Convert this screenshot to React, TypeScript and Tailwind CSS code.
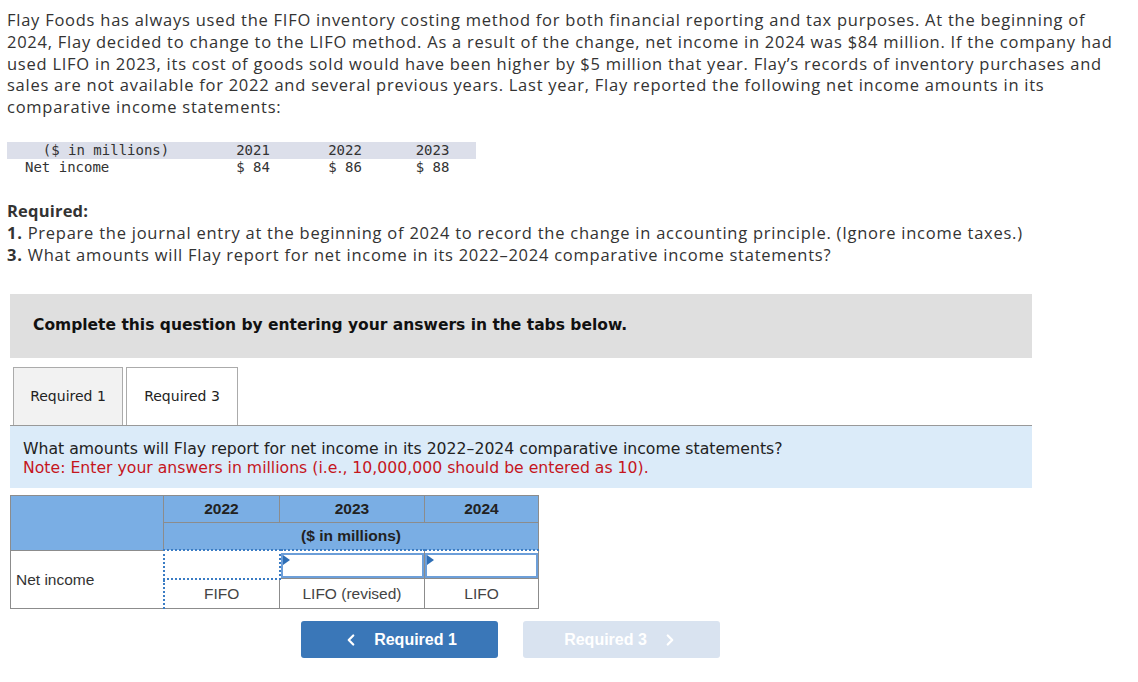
import { ChevronLeft, ChevronRight } from 'lucide-react';

const intro = [
  'Flay Foods has always used the FIFO inventory costing method for both financial reporting and tax purposes. At the beginning of',
  '2024, Flay decided to change to the LIFO method. As a result of the change, net income in 2024 was $84 million. If the company had',
  'used LIFO in 2023, its cost of goods sold would have been higher by $5 million that year. Flay’s records of inventory purchases and',
  'sales are not available for 2022 and several previous years. Last year, Flay reported the following net income amounts in its',
  'comparative income statements:',
];

const prior = [
  { year: '2021', value: '$ 84' },
  { year: '2022', value: '$ 86' },
  { year: '2023', value: '$ 88' },
];

function Flag() {
  return (
    <svg width="7" height="10" viewBox="0 0 7 10" className="absolute left-0 top-0">
      <path d="M0 0 L7 5 L0 10 Z" fill="#2f6fb6" />
    </svg>
  );
}

export default function App() {
  return (
    <div className="w-[1138px] h-[682px] bg-white overflow-hidden text-[#333]">
      {/* problem text */}
      <div className="pl-[7px] pt-[9px] font-['Open_Sans',sans-serif] text-[16.5px] tracking-[0.75px] leading-[21.75px]">
        {intro.map((line) => (
          <div key={line} className="whitespace-nowrap">
            {line}
          </div>
        ))}
      </div>

      {/* prior year figures */}
      <div className="ml-[7px] mt-[24px] w-[469px] font-['DejaVu_Sans_Mono',monospace] text-[14px] leading-[17px]">
        <div className="grid grid-cols-[198px_96px_88px_87px] bg-[#dcdfea]">
          <div className="text-center">($ in millions)</div>
          {prior.map((p) => (
            <div key={p.year} className="text-center">
              {p.year}
            </div>
          ))}
        </div>
        <div className="grid grid-cols-[198px_96px_88px_87px]">
          <div className="pl-[18px]">Net income</div>
          {prior.map((p) => (
            <div key={p.year} className="text-center">
              {p.value}
            </div>
          ))}
        </div>
      </div>

      {/* required */}
      <div className="pl-[7px] mt-[24px] font-['Open_Sans',sans-serif] text-[16.5px] tracking-[0.75px] leading-[22px]">
        <div className="font-bold tracking-[0.2px]">Required:</div>
        <div className="whitespace-nowrap">
          <span className="font-bold">1.</span> Prepare the journal entry at the beginning of 2024 to record the change in accounting principle. (Ignore income taxes.)
        </div>
        <div className="whitespace-nowrap">
          <span className="font-bold">3.</span> What amounts will Flay report for net income in its 2022–2024 comparative income statements?
        </div>
      </div>

      <div className="ml-[10px] mt-[28px] w-[1022px] h-[64px] bg-[#dfdfdf] flex items-center pl-[23px] font-['DejaVu_Sans',sans-serif] font-bold text-[15.5px] text-[#111]">
        Complete this question by entering your answers in the tabs below.
      </div>

      {/* tabs */}
      <div className="ml-[13px] mt-[9px] flex gap-[3px] h-[58px] font-['DejaVu_Sans',sans-serif] text-[14px] text-[#222]">
        <div className="w-[110px] bg-[#f2f2f2] border border-b-0 border-[#ababab] flex items-center justify-center">Required 1</div>
        <div className="w-[112px] bg-white border border-b-0 border-[#ababab] flex items-center justify-center">Required 3</div>
      </div>

      <div className="ml-[10px] w-[1022px] h-[63px] bg-[#dbebf9] border-t border-[#999] pl-[13px] pt-[13px] font-['DejaVu_Sans',sans-serif] text-[15.7px] leading-[19px]">
        <div className="text-[#222]">What amounts will Flay report for net income in its 2022–2024 comparative income statements?</div>
        <div className="text-[#c5161d]">Note: Enter your answers in millions (i.e., 10,000,000 should be entered as 10).</div>
      </div>

      {/* answer table */}
      <table className="ml-[10px] mt-[7px] border-collapse font-['Liberation_Sans',Arial,sans-serif] text-[15.5px] text-[#222]">
        <colgroup>
          <col className="w-[153px]" />
          <col className="w-[116px]" />
          <col className="w-[145px]" />
          <col className="w-[114px]" />
        </colgroup>
        <thead>
          <tr className="h-[27px] bg-[#7aaee4]">
            <th rowSpan={2} className="border border-[#8c8c8c]"></th>
            <th className="border border-[#8c8c8c] font-bold">2022</th>
            <th className="border border-[#8c8c8c] font-bold">2023</th>
            <th className="border border-[#8c8c8c] font-bold">2024</th>
          </tr>
          <tr className="h-[28px] bg-[#7aaee4]">
            <th colSpan={3} className="border border-[#8c8c8c] font-bold">($ in millions)</th>
          </tr>
        </thead>
        <tbody>
          <tr className="h-[28px]">
            <td rowSpan={2} className="border border-[#8c8c8c] pl-[5px] text-left text-[#333]">Net income</td>
            <td className="border-2 border-dotted border-[#3a7cc4] p-0"></td>
            <td className="border border-[#8c8c8c] border-t-2 border-t-[#3a7cc4] [border-top-style:dotted] p-0 pt-[2px]">
              <div className="relative h-[25px] border-2 border-[#6d9fd9]">
                <Flag />
              </div>
            </td>
            <td className="border border-[#8c8c8c] border-t-2 border-t-[#3a7cc4] [border-top-style:dotted] p-0 pt-[2px]">
              <div className="relative h-[25px] border-2 border-[#6d9fd9]">
                <Flag />
              </div>
            </td>
          </tr>
          <tr className="h-[30px] text-[#444]">
            <td className="border border-[#8c8c8c] border-l-2 border-l-[#3a7cc4] [border-left-style:dotted] text-center">FIFO</td>
            <td className="border border-[#8c8c8c] text-center">LIFO (revised)</td>
            <td className="border border-[#8c8c8c] text-center">LIFO</td>
          </tr>
        </tbody>
      </table>

      {/* nav buttons */}
      <div className="ml-[301px] mt-[12px] flex gap-[25px] font-['Liberation_Sans',Arial,sans-serif] font-bold text-[16px] text-white">
        <button className="w-[197px] h-[37px] rounded-[3px] bg-[#3a77b8] flex items-center justify-center gap-[14px]">
          <ChevronLeft size={18} strokeWidth={3} />
          Required 1
        </button>
        <button className="w-[197px] h-[37px] rounded-[3px] bg-[#d9e3f0] flex items-center justify-center gap-[14px]">
          Required 3
          <ChevronRight size={18} strokeWidth={3} />
        </button>
      </div>
    </div>
  );
}
